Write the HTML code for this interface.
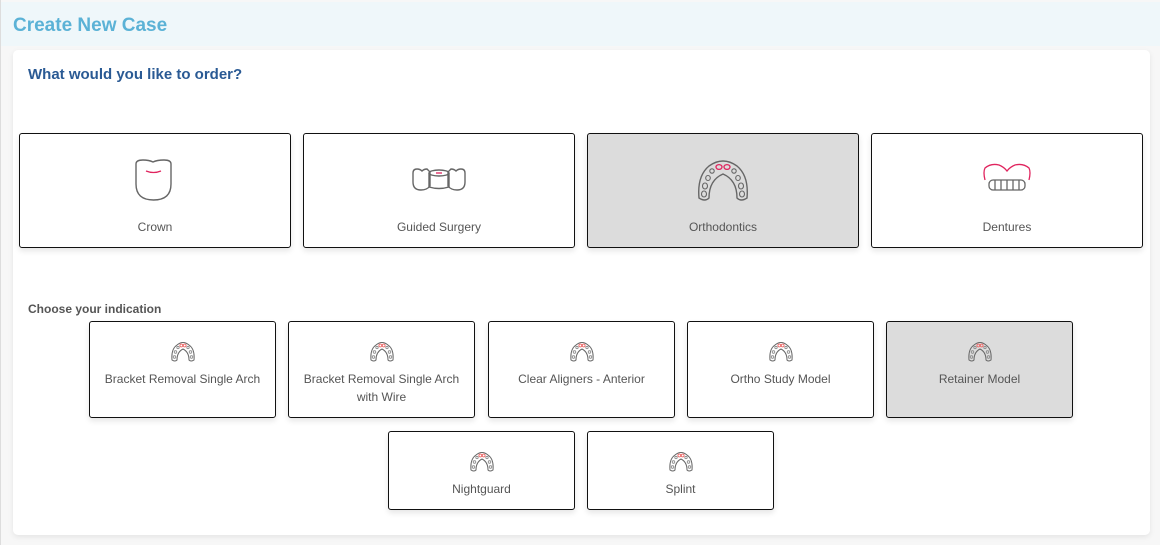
<!DOCTYPE html>
<html><head><style>
*{box-sizing:border-box;margin:0;padding:0}
body{width:1160px;height:545px;background:#f7f7f7;font-family:"Liberation Sans",sans-serif;position:relative;overflow:hidden}
.edge{position:absolute;left:0;top:0;width:1px;height:545px;background:#ddd}
.hdr{position:absolute;left:1px;top:2px;width:1159px;height:44px;background:#eff7fa}
.hdr h1{position:absolute;left:12px;top:13px;font-size:19px;font-weight:bold;color:#5bb2d6}
.panel{position:absolute;left:13px;top:50px;width:1137px;height:485px;background:#fff;border-radius:5px;box-shadow:0 2px 6px rgba(0,0,0,.08)}
.q{position:absolute;left:28px;top:66px;font-size:15px;font-weight:bold;color:#2a5a94}
.card{position:absolute;border:1px solid #111;border-radius:3px;background:#fff;text-align:center;color:#555;font-size:12px;box-shadow:0 3px 6px rgba(0,0,0,.1)}
.big{top:133px;width:272px;height:115px}
.big .lbl{position:absolute;left:0;right:0;top:86px}
.big svg{position:absolute;left:50%;transform:translateX(-50%);top:24px}
.sel{background:#dcdcdc}
.sm{width:187px}
.sm svg{display:block;margin:19px auto 0}
.sm .lbl{margin-top:7px;line-height:18px;padding:0 8px}
.ch{position:absolute;left:28px;top:302px;font-size:12px;font-weight:bold;color:#555}
</style></head><body>
<div class="edge"></div>
<div class="hdr"><h1>Create New Case</h1></div>
<div class="panel"></div>
<div class="q">What would you like to order?</div>

<div class="card big" style="left:19px">
<svg width="44" height="46" viewBox="0 0 44 46"><path d="M3 6 Q3 2 10 2 Q16 2 20 4 Q24 2 31 2 Q38 2 38 6 V26 Q38 42 20.5 42 Q3 42 3 26 Z" fill="none" stroke="#666" stroke-width="1.4"/><path d="M13 13 Q20.5 16 28 13" fill="none" stroke="#e0245e" stroke-width="1.3"/></svg>
<div class="lbl">Crown</div></div>

<div class="card big" style="left:303px">
<svg width="64" height="46" viewBox="0 0 64 46"><g fill="none" stroke="#666" stroke-width="1.4"><path d="M6 15 Q6 11 10 11 Q13 11 15 13 Q17 11 20 11 L23 14 V28 Q20 32 14 32 Q6 32 6 24Z"/><path d="M58 15 Q58 11 54 11 Q51 11 49 13 Q47 11 44 11 L41 14 V28 Q44 32 50 32 Q58 32 58 24Z"/><ellipse cx="32" cy="15" rx="10" ry="3"/><path d="M22 15 V29 Q32 32 42 29 V15"/></g><path d="M29 15 H35" stroke="#e0245e" stroke-width="1.3"/></svg>
<div class="lbl">Guided Surgery</div></div>

<div class="card big sel" style="left:587px">
<svg width="56" height="46" viewBox="0 0 56 46"><path d="M4 40 Q2 18 14 8 Q28 -2 42 8 Q54 18 52 40 Q46 44 42 40 Q42 22 28 16 Q14 22 14 40 Q10 44 4 40Z" fill="none" stroke="#666" stroke-width="1.4"/><g fill="none" stroke="#666" stroke-width="1.1"><ellipse cx="9" cy="36" rx="2.5" ry="3"/><ellipse cx="47" cy="36" rx="2.5" ry="3"/><ellipse cx="10" cy="28" rx="2.5" ry="3"/><ellipse cx="46" cy="28" rx="2.5" ry="3"/><ellipse cx="13" cy="20" rx="2.3" ry="2.5"/><ellipse cx="43" cy="20" rx="2.3" ry="2.5"/><ellipse cx="17" cy="13" rx="2.2" ry="2.2"/><ellipse cx="39" cy="13" rx="2.2" ry="2.2"/></g><g fill="none" stroke="#e0245e" stroke-width="1.3"><ellipse cx="24" cy="9" rx="3" ry="2.4"/><ellipse cx="32" cy="9" rx="3" ry="2.4"/></g></svg>
<div class="lbl">Orthodontics</div></div>

<div class="card big" style="left:871px">
<svg width="56" height="46" viewBox="0 0 56 46"><path d="M6 22 Q4 14 6 10 Q12 5 20 7 Q25 9 28 13 Q31 9 36 7 Q44 5 50 10 Q52 14 50 22" fill="none" stroke="#e0245e" stroke-width="1.3"/><g fill="none" stroke="#666" stroke-width="1.3"><rect x="10" y="22" width="36" height="10" rx="4"/><path d="M16 22V32M22 22V32M28 22V32M34 22V32M40 22V32"/></g></svg>
<div class="lbl">Dentures</div></div>

<div class="ch">Choose your indication</div>

<svg width="0" height="0" style="position:absolute"><defs><g id="ic"><path d="M2 19 Q1 8 7 4 Q13 -1 19 4 Q25 8 24 19 Q21 21 19 19 Q19 11 13 8 Q7 11 7 19 Q5 21 2 19Z" fill="none" stroke="#666" stroke-width="1"/><g fill="none" stroke="#888" stroke-width=".8"><circle cx="4.5" cy="16" r="1.3"/><circle cx="21.5" cy="16" r="1.3"/><circle cx="5.5" cy="11" r="1.3"/><circle cx="20.5" cy="11" r="1.3"/><circle cx="8" cy="6.5" r="1.2"/><circle cx="18" cy="6.5" r="1.2"/></g><g fill="none" stroke="#e66" stroke-width=".9"><circle cx="11.3" cy="4.5" r="1.4"/><circle cx="14.7" cy="4.5" r="1.4"/></g></g></defs></svg>

<div class="card sm" style="left:89px;top:321px;height:97px"><svg width="26" height="22"><use href="#ic"/></svg><div class="lbl">Bracket Removal Single Arch</div></div>
<div class="card sm" style="left:288px;top:321px;height:97px"><svg width="26" height="22"><use href="#ic"/></svg><div class="lbl">Bracket Removal Single Arch with Wire</div></div>
<div class="card sm" style="left:488px;top:321px;height:97px"><svg width="26" height="22"><use href="#ic"/></svg><div class="lbl">Clear Aligners - Anterior</div></div>
<div class="card sm" style="left:687px;top:321px;height:97px"><svg width="26" height="22"><use href="#ic"/></svg><div class="lbl">Ortho Study Model</div></div>
<div class="card sm sel" style="left:886px;top:321px;height:97px"><svg width="26" height="22"><use href="#ic"/></svg><div class="lbl">Retainer Model</div></div>
<div class="card sm" style="left:388px;top:431px;height:79px"><svg width="26" height="22"><use href="#ic"/></svg><div class="lbl">Nightguard</div></div>
<div class="card sm" style="left:587px;top:431px;height:79px"><svg width="26" height="22"><use href="#ic"/></svg><div class="lbl">Splint</div></div>
</body></html>
